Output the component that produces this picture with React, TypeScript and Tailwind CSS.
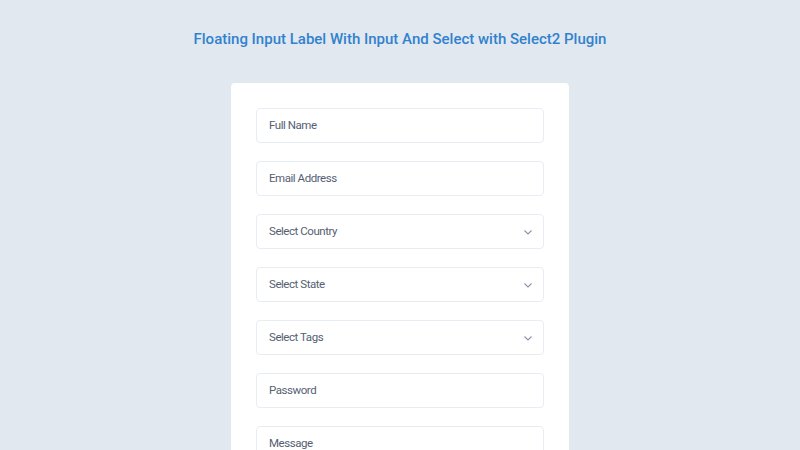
import React from 'react';

const fields: { label: string; select?: boolean }[] = [
  { label: 'Full Name' },
  { label: 'Email Address' },
  { label: 'Select Country', select: true },
  { label: 'Select State', select: true },
  { label: 'Select Tags', select: true },
  { label: 'Password' },
  { label: 'Message' },
];

const Chevron = () => (
  <svg className="w-[10px] h-[10px] text-[#8a94a6]" viewBox="0 0 10 10" fill="none" stroke="currentColor" strokeWidth="1.1">
    <path d="M1.5 3.5 L5 7 L8.5 3.5" />
  </svg>
);

export default function App() {
  return (
    <div className="min-h-[450px] bg-[#e2e8f0] font-['Roboto',sans-serif] flex flex-col items-center pt-[29px]">
      <h1 className="text-[15px] leading-[20px] font-medium text-[#3182ce]">
        Floating Input Label With Input And Select with Select2 Plugin
      </h1>
      <div className="mt-[34px] w-[338px] bg-white rounded-[4px] p-[25px] flex flex-col gap-[18px]">
        {fields.map((f) => (
          <div
            key={f.label}
            className="h-[35px] border border-[#e8edf3] rounded-[4px] flex items-center justify-between pl-[12px] pr-[10px] text-[11.5px] tracking-[-0.45px] text-[#556072]"
          >
            <span className="pt-[1px]">{f.label}</span>
            {f.select && <Chevron />}
          </div>
        ))}
      </div>
    </div>
  );
}
